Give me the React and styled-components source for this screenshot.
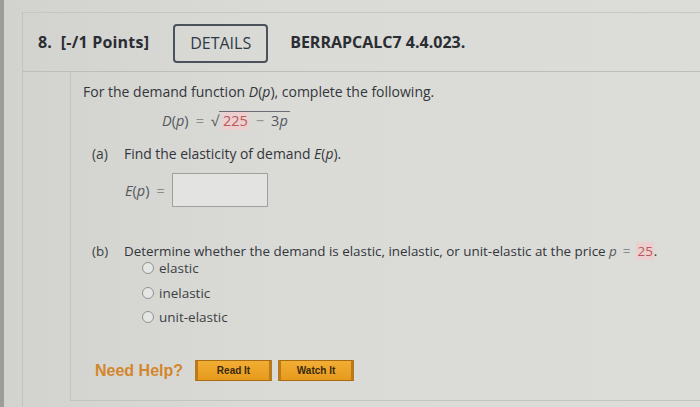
import React from "react";
import styled, { createGlobalStyle } from "styled-components";

const Global = createGlobalStyle`
  html, body { margin: 0; padding: 0; }
  body {
    width: 700px; height: 407px; overflow: hidden;
    background: #d8d9d5;
    font-family: "Open Sans", "Noto Sans", sans-serif;
    color: #2b2e33;
  }
`;

const Page = styled.div`
  display: flex;
  width: 700px;
  height: 407px;
  background: linear-gradient(90deg, #d2d3cf 0%, #dadbd7 40%, #dcddd9 100%);
`;

const EdgeStrip = styled.div`
  width: 4px;
  flex: none;
  background: #9c9d99;
`;

const Card = styled.div`
  flex: 1;
  margin: 12px 0 0 18px;
  border-left: 1px solid #c2c3bf;
  display: flex;
  flex-direction: column;
`;

const Header = styled.div`
  height: 58px;
  display: flex;
  align-items: center;
  padding-left: 15px;
  border-top: 1px solid #c6c7c3;
  border-bottom: 1px solid #bdbeba;
`;

const Points = styled.div`
  font-weight: 700;
  font-size: 16px;
  letter-spacing: 0.2px;
  color: #2a2d32;
`;

const DetailsBox = styled.div`
  width: 91px;
  height: 35px;
  margin: 2px 22px 0 24px;
  border: 2px solid #4b525b;
  border-radius: 4px;
  display: flex;
  align-items: center;
  justify-content: center;
  font-size: 16px;
  color: #2d3947;
`;

const Code = styled.div`
  font-weight: 700;
  font-size: 16px;
  color: #2a2d32;
`;

const Body = styled.div`
  flex: 1;
  margin: 0 0 6px 47px;
  border-left: 1px solid #c4c5c1;
  border-bottom: 1px solid #c4c5c1;
  padding: 10px 0 0 12px;
  display: flex;
  flex-direction: column;
`;

const Text = styled.div`
  font-size: 14px;
  line-height: 20px;
  color: #33363b;
  white-space: nowrap;
  display: flex;
  align-items: center;
`;

const Mi = styled.span`
  font-style: italic;
  color: ${(p) => p.$c || "inherit"};
`;

const MathLine = styled.div`
  display: flex;
  align-items: center;
  font-size: 14.5px;
  color: #55585d;
  padding-left: ${(p) => p.$indent}px;
  margin-top: ${(p) => p.$mt}px;
  height: 22px;
`;

const Eq = styled.span`
  color: #8a8c90;
  margin: 0 ${(p) => p.$m ?? 7}px;
`;

const Radical = styled.span`
  display: inline-flex;
  align-items: flex-end;
`;

const Under = styled.span`
  border-top: 1px solid #6a6d72;
  padding: 0 2px 0 3px;
  line-height: 18px;
  display: inline-flex;
  align-items: center;
`;

const Hl = styled.span`
  background: #ecd0cf;
  color: #b9595c;
  padding: 0 1px;
`;

const Part = styled.div`
  display: flex;
  align-items: center;
  font-size: ${(p) => p.$fs}px;
  color: #33363b;
  white-space: nowrap;
  padding-left: 9px;
  margin-top: ${(p) => p.$mt}px;
  height: 20px;
`;

const PartLabel = styled.span`
  width: 32px;
  color: #3a3d42;
`;

const AnswerRow = styled.div`
  display: flex;
  align-items: center;
  padding-left: 42px;
  margin-top: 10px;
  font-size: 14.5px;
  color: #55585d;
`;

const AnswerBox = styled.div`
  width: 94px;
  height: 32px;
  border: 1px solid #9fa09d;
  background: #e3e4e1;
  margin-left: 0;
`;

const Options = styled.div`
  display: flex;
  flex-direction: column;
  gap: 4.5px;
  margin-top: -3px;
  padding-left: 59px;
`;

const Option = styled.label`
  display: flex;
  align-items: center;
  gap: 5px;
  font-size: 13.5px;
  color: #3c3f44;
  height: 20px;
`;

const Radio = styled.span`
  width: 10px;
  height: 10px;
  border-radius: 50%;
  border: 1px solid #8e9094;
  background: #e6e7e4;
`;

const HelpRow = styled.div`
  display: flex;
  align-items: center;
  gap: 12px;
  margin-top: 33px;
  padding-left: 12px;
`;

const NeedHelp = styled.span`
  font-family: "Liberation Sans", Arial, sans-serif;
  font-weight: 700;
  font-size: 16px;
  color: #d4862c;
`;

const HelpButtons = styled.div`
  display: flex;
  gap: 6px;
`;

const HelpButton = styled.button`
  width: ${(p) => p.$w}px;
  height: 21px;
  padding: 0;
  border: 1px solid #a86a12;
  border-left: 3px solid #b97a1c;
  border-right: 3px solid #b97a1c;
  background: linear-gradient(#f2ae34, #e69a1c);
  font-family: "Liberation Sans", Arial, sans-serif;
  font-weight: 700;
  font-size: 10px;
  color: #3a2a10;
`;

export default function App() {
  return (
    <>
      <Global />
      <Page>
        <EdgeStrip />
        <Card>
          <Header>
            <Points>8.&nbsp; [-/1 Points]</Points>
            <DetailsBox>DETAILS</DetailsBox>
            <Code>BERRAPCALC7 4.4.023.</Code>
          </Header>
          <Body>
            <Text>
              For the demand function&nbsp;<Mi>D</Mi>(<Mi>p</Mi>), complete the following.
            </Text>
            <MathLine $indent={79} $mt={7}>
              <Mi>D</Mi>(<Mi>p</Mi>)<Eq>=</Eq>
              <Radical>
                <span>√</span>
                <Under>
                  <Hl>225</Hl>
                  <Eq $m={7}>−</Eq>3<Mi>p</Mi>
                </Under>
              </Radical>
            </MathLine>
            <Part $mt={12} $fs={13.9}>
              <PartLabel>(a)</PartLabel>
              Find the elasticity of demand&nbsp;<Mi>E</Mi>(<Mi>p</Mi>).
            </Part>
            <AnswerRow>
              <Mi>E</Mi>(<Mi>p</Mi>)<Eq>=</Eq>
              <AnswerBox />
            </AnswerRow>
            <Part $mt={34} $fs={13.4}>
              <PartLabel>(b)</PartLabel>
              Determine whether the demand is elastic, inelastic, or unit-elastic at the price&nbsp;
              <Mi $c="#55585d">p</Mi>
              <Eq $m={6}>=</Eq>
              <Hl>25</Hl>.
            </Part>
            <Options>
              <Option><Radio />elastic</Option>
              <Option><Radio />inelastic</Option>
              <Option><Radio />unit-elastic</Option>
            </Options>
            <HelpRow>
              <NeedHelp>Need Help?</NeedHelp>
              <HelpButtons>
                <HelpButton $w={77}>Read It</HelpButton>
                <HelpButton $w={76}>Watch It</HelpButton>
              </HelpButtons>
            </HelpRow>
          </Body>
        </Card>
      </Page>
    </>
  );
}
